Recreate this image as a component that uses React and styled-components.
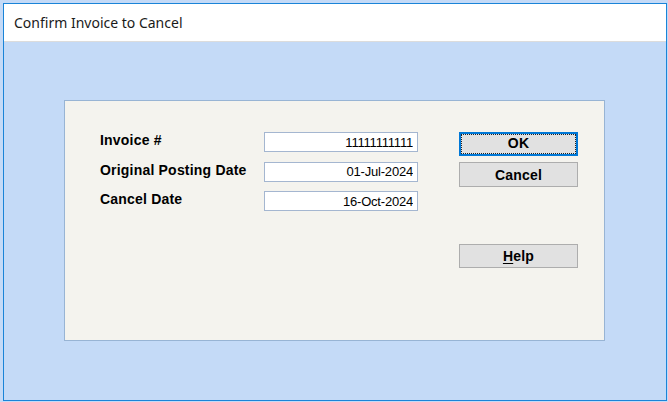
import React, { useState } from 'react';
import styled, { createGlobalStyle } from 'styled-components';

const GlobalStyle = createGlobalStyle`
  html, body {
    margin: 0;
    padding: 0;
    background: #c4daf7;
  }
  #root {
    width: 668px;
    height: 402px;
  }
`;

const Page = styled.div`
  width: 668px;
  height: 402px;
  padding: 3px 1px 1px 3px;
  box-sizing: border-box;
`;

const Window = styled.div`
  width: 100%;
  height: 100%;
  box-sizing: border-box;
  border: 1px solid #1a84d8;
  background: #c4daf7;
  display: flex;
  flex-direction: column;
`;

const TitleBar = styled.div`
  height: 37px;
  flex: none;
  background: #ffffff;
  border-bottom: 1px solid #dcdcdc;
  display: flex;
  align-items: center;
  padding-left: 10px;
  font-family: "Noto Sans", "Open Sans", sans-serif;
  font-size: 14px;
  color: #1a1a1a;
`;

const Body = styled.div`
  flex: 1;
  padding: 58px 0 0 60px;
`;

const Panel = styled.div`
  width: 541px;
  height: 241px;
  box-sizing: border-box;
  background: #f4f3ee;
  border: 1px solid #98b4d4;
  padding: 31px 0 0 35px;
  display: flex;
  gap: 41px;
`;

const Fields = styled.div`
  display: grid;
  grid-template-columns: 164px 154px;
  grid-auto-rows: 20px;
  row-gap: 9.5px;
  align-content: start;
`;

const Label = styled.label`
  font-family: "Liberation Sans", Arial, sans-serif;
  font-weight: bold;
  font-size: 14px;
  letter-spacing: 0.2px;
  line-height: 14px;
  padding-top: 1px;
  color: #000;
`;

const Input = styled.input`
  width: 154px;
  height: 20px;
  box-sizing: border-box;
  border: 1px solid #a4b6d0;
  background: #fff;
  padding: 0 4px 0 2px;
  text-align: right;
  font-family: "Liberation Sans", Arial, sans-serif;
  font-size: 13px;
  letter-spacing: -0.2px;
  color: #000;
  outline: none;
`;

const Buttons = styled.div`
  display: flex;
  flex-direction: column;
  width: 119px;
`;

const Button = styled.button`
  height: ${p => p.h || 24}px;
  margin-top: ${p => p.mt || 0}px;
  box-sizing: border-box;
  background: #e1e1e1;
  border: ${p => (p.focused ? '2px solid #0078d7' : '1px solid #adadad')};
  font-family: "Liberation Sans", Arial, sans-serif;
  font-weight: bold;
  font-size: 14px;
  letter-spacing: 0.2px;
  color: #000;
  padding: 0 0 ${p => (p.focused ? 2 : 0)}px;
  cursor: default;
  outline: ${p => (p.focused ? '1px dotted #222' : 'none')};
  outline-offset: -3px;

  u {
    text-decoration: underline;
    text-underline-offset: 2px;
  }
`;

export default function App() {
  const [invoice, setInvoice] = useState('11111111111');
  const [posting, setPosting] = useState('01-Jul-2024');
  const [cancel, setCancel] = useState('16-Oct-2024');

  return (
    <>
      <GlobalStyle />
      <Page>
        <Window>
          <TitleBar>Confirm Invoice to Cancel</TitleBar>
          <Body>
            <Panel>
              <Fields>
                <Label>Invoice #</Label>
                <Input value={invoice} onChange={e => setInvoice(e.target.value)} />
                <Label>Original Posting Date</Label>
                <Input value={posting} onChange={e => setPosting(e.target.value)} />
                <Label>Cancel Date</Label>
                <Input value={cancel} onChange={e => setCancel(e.target.value)} />
              </Fields>
              <Buttons>
                <Button focused h={24}>OK</Button>
                <Button h={25} mt={6}>Cancel</Button>
                <Button h={24} mt={57}><u>H</u>elp</Button>
              </Buttons>
            </Panel>
          </Body>
        </Window>
      </Page>
    </>
  );
}
